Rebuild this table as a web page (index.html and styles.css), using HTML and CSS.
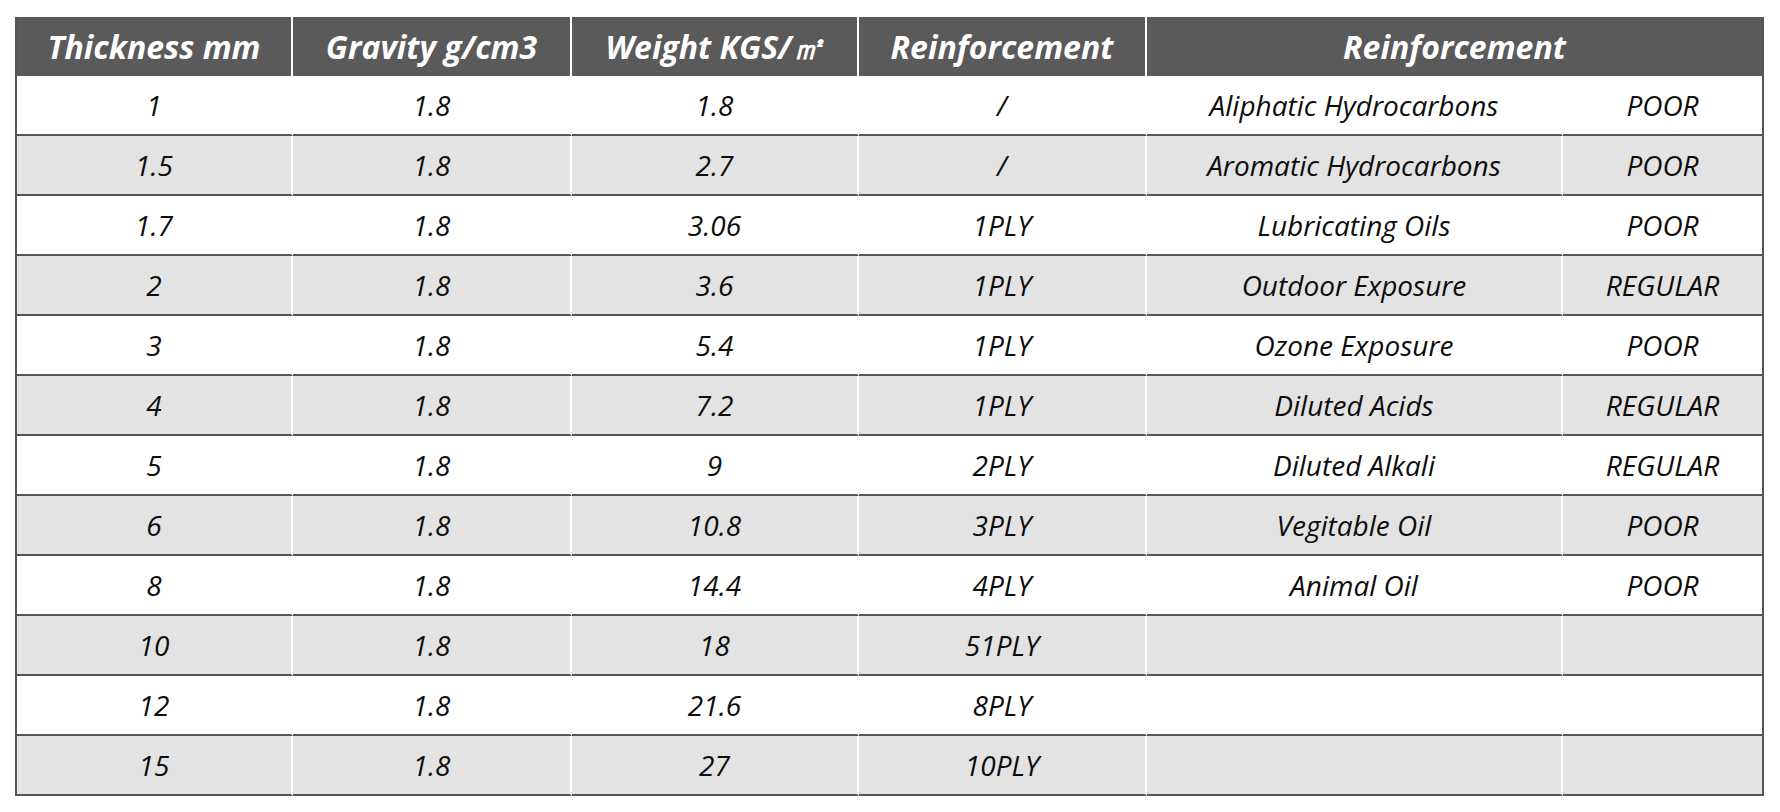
FILE: index.html
```html
<!DOCTYPE html>
<html>
<head>
<meta charset="utf-8">
<link rel="stylesheet" href="styles.css">
</head>
<body>
<table class="spec">
  <colgroup>
    <col class="c1"><col class="c2"><col class="c3"><col class="c4"><col class="c5"><col class="c6">
  </colgroup>
  <thead>
    <tr>
      <th>Thickness mm</th>
      <th>Gravity g/cm3</th>
      <th>Weight KGS/㎡</th>
      <th>Reinforcement</th>
      <th colspan="2" class="last">Reinforcement</th>
    </tr>
  </thead>
  <tbody>
    <tr><td>1</td><td>1.8</td><td>1.8</td><td>/</td><td>Aliphatic Hydrocarbons</td><td class="last">POOR</td></tr>
    <tr class="alt"><td>1.5</td><td>1.8</td><td>2.7</td><td>/</td><td>Aromatic Hydrocarbons</td><td class="last">POOR</td></tr>
    <tr><td>1.7</td><td>1.8</td><td>3.06</td><td>1PLY</td><td>Lubricating Oils</td><td class="last">POOR</td></tr>
    <tr class="alt"><td>2</td><td>1.8</td><td>3.6</td><td>1PLY</td><td>Outdoor Exposure</td><td class="last">REGULAR</td></tr>
    <tr><td>3</td><td>1.8</td><td>5.4</td><td>1PLY</td><td>Ozone Exposure</td><td class="last">POOR</td></tr>
    <tr class="alt"><td>4</td><td>1.8</td><td>7.2</td><td>1PLY</td><td>Diluted Acids</td><td class="last">REGULAR</td></tr>
    <tr><td>5</td><td>1.8</td><td>9</td><td>2PLY</td><td>Diluted Alkali</td><td class="last">REGULAR</td></tr>
    <tr class="alt"><td>6</td><td>1.8</td><td>10.8</td><td>3PLY</td><td>Vegitable Oil</td><td class="last">POOR</td></tr>
    <tr><td>8</td><td>1.8</td><td>14.4</td><td>4PLY</td><td>Animal Oil</td><td class="last">POOR</td></tr>
    <tr class="alt"><td>10</td><td>1.8</td><td>18</td><td>51PLY</td><td></td><td class="last"></td></tr>
    <tr><td>12</td><td>1.8</td><td>21.6</td><td>8PLY</td><td></td><td class="last"></td></tr>
    <tr class="alt"><td>15</td><td>1.8</td><td>27</td><td>10PLY</td><td></td><td class="last"></td></tr>
  </tbody>
</table>
</body>
</html>
```

FILE: styles.css
```css
html, body {
  margin: 0;
  padding: 0;
  background: #ffffff;
}

.spec {
  margin: 17px 0 0 15px;
  width: 1749px;
  table-layout: fixed;
  border-collapse: separate;
  border-spacing: 0;
  border-left: 2px solid #555555;
  border-right: 2px solid #555555;
  font-family: "Open Sans", "Noto Sans", sans-serif;
  font-style: italic;
}

.c1 { width: 276px; }
.c2 { width: 279px; }
.c3 { width: 287px; }
.c4 { width: 288px; }
.c5 { width: 416px; }
.c6 { width: 199px; }

.spec th {
  height: 59px;
  padding: 0;
  background: #5a5a5a;
  color: #ffffff;
  font-weight: 700;
  font-size: 32px;
  line-height: 1;
  text-align: center;
  vertical-align: middle;
  border-right: 2px solid #ffffff;
  box-sizing: border-box;
}

.spec td {
  height: 60px;
  padding: 0;
  font-size: 28px;
  line-height: 1;
  color: #0d0d0d;
  text-align: center;
  vertical-align: middle;
  border-right: 2px solid #ffffff;
  border-bottom: 2px solid #555555;
  box-sizing: border-box;
}

.spec th.last,
.spec td.last {
  border-right: none;
}

.spec tr.alt td {
  background: #e3e3e3;
}
```
